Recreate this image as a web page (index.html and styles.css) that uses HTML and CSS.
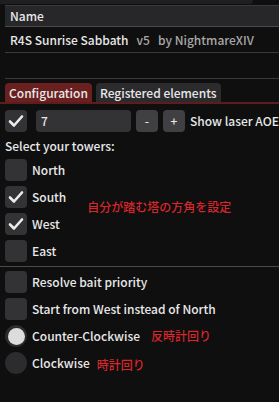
FILE: index.html
```html
<!DOCTYPE html>
<html>
<head>
<meta charset="utf-8">
<link rel="stylesheet" href="styles.css">
</head>
<body>
<div class="topstrip"></div>
<div class="table">
  <div class="thead">Name</div>
  <div class="trow"><span class="title">R4S Sunrise Sabbath</span><span class="meta">v5</span><span class="meta">by NightmareXIV</span></div>
  <div class="tempty"></div>
</div>
<div class="tabs">
  <div class="tab active">Configuration</div>
  <div class="tab">Registered elements</div>
</div>
<div class="content">
  <div class="row">
    <span class="cb checked"><svg viewBox="0 0 22 22"><path d="M5 11.5 L9 15.5 L17 6.5" /></svg></span>
    <span class="input">7</span>
    <span class="btn">-</span>
    <span class="btn">+</span>
    <span class="label">Show laser AOE</span>
  </div>
  <div class="text">Select your towers:</div>
  <div class="row"><span class="cb"></span><span class="label">North</span></div>
  <div class="row"><span class="cb checked"><svg viewBox="0 0 22 22"><path d="M5 11.5 L9 15.5 L17 6.5" /></svg></span><span class="label">South</span><span class="note note-tower">自分が踏む塔の方角を設定</span></div>
  <div class="row"><span class="cb checked"><svg viewBox="0 0 22 22"><path d="M5 11.5 L9 15.5 L17 6.5" /></svg></span><span class="label">West</span></div>
  <div class="row"><span class="cb"></span><span class="label">East</span></div>
  <div class="sep"></div>
  <div class="row"><span class="cb"></span><span class="label">Resolve bait priority</span></div>
  <div class="row"><span class="cb"></span><span class="label">Start from West instead of North</span></div>
  <div class="row"><span class="radio on"><span class="dot"></span></span><span class="label">Counter-Clockwise</span><span class="note note-ccw">反時計回り</span></div>
  <div class="row"><span class="radio"></span><span class="label">Clockwise</span><span class="note note-cw">時計回り</span></div>
</div>
</body>
</html>
```
FILE: styles.css
```css
* { box-sizing: border-box; }
html, body { margin: 0; padding: 0; }
body {
  width: 279px;
  height: 402px;
  overflow: hidden;
  background: #0f0f10;
  color: #e8e8e8;
  font-family: "Noto Sans CJK JP", "Noto Sans", sans-serif;
  font-size: 12px;
  font-weight: 500;
  line-height: 16px;
}
.topstrip {
  width: 253px;
  height: 4px;
  background: #1f1f21;
  border-bottom-right-radius: 3px;
}
.table {
  margin-left: 5px;
  margin-top: 1px;
}
.thead {
  height: 22px;
  background: #27272a;
  border-top: 1px solid #3a3a3d;
  border-bottom: 1px solid #4a4a4e;
  padding-left: 5px;
  display: flex;
  align-items: center;
}
.trow {
  height: 26px;
  border-bottom: 1px solid #3a3a3d;
  padding-left: 5px;
  display: flex;
  align-items: center;
  gap: 8px;
  white-space: nowrap;
}
.meta { color: #a8a8a8; }
.tempty {
  height: 26px;
  border-bottom: 1px solid #3a3a3d;
}
.tabs {
  margin-top: 4px;
  padding-left: 5px;
  display: flex;
  gap: 4px;
  border-bottom: 2px solid #5e1c1c;
  height: 21px;
}
.tab {
  height: 19px;
  padding: 0 4px;
  background: #2b2b2e;
  border-radius: 4px 4px 0 0;
  display: flex;
  align-items: center;
}
.tab.active { background: #6b2020; }
.content {
  padding: 6px 0 0 5px;
  display: flex;
  flex-direction: column;
  gap: 5px;
}
.row {
  height: 22px;
  display: flex;
  align-items: center;
  white-space: nowrap;
}
.text { height: 17px; display: flex; align-items: center; }
.cb {
  width: 22px;
  height: 22px;
  border-radius: 4px;
  background: #333336;
  flex: none;
  display: flex;
  align-items: center;
  justify-content: center;
}
.cb svg { width: 22px; height: 22px; }
.cb path { fill: none; stroke: #ececec; stroke-width: 2.6; stroke-linecap: round; stroke-linejoin: round; }
.label { margin-left: 5px; }
.input {
  margin-left: 9px;
  width: 95px;
  height: 22px;
  background: #333336;
  border-radius: 4px;
  padding-left: 5px;
  display: flex;
  align-items: center;
}
.btn {
  margin-left: 5px;
  width: 22px;
  height: 22px;
  background: #404043;
  border-radius: 4px;
  display: flex;
  align-items: center;
  justify-content: center;
}
.radio {
  width: 22px;
  height: 22px;
  border-radius: 50%;
  background: #2c2c2e;
  flex: none;
  display: flex;
  align-items: center;
  justify-content: center;
}
.radio .dot {
  width: 17px;
  height: 17px;
  border-radius: 50%;
  background: #dcdcdc;
}
.note {
  color: #d8262b;
  font-size: 12px;
  font-weight: 500;
}
.note-tower { margin-left: 21px; position: relative; top: 10px; }
.note-ccw { margin-left: 11px; }
.note-cw { margin-left: 7px; position: relative; top: 2px; }
.sep {
  height: 1px;
  background: #4a4a4e;
  margin: -1px 0 -1px -5px;
}
```
